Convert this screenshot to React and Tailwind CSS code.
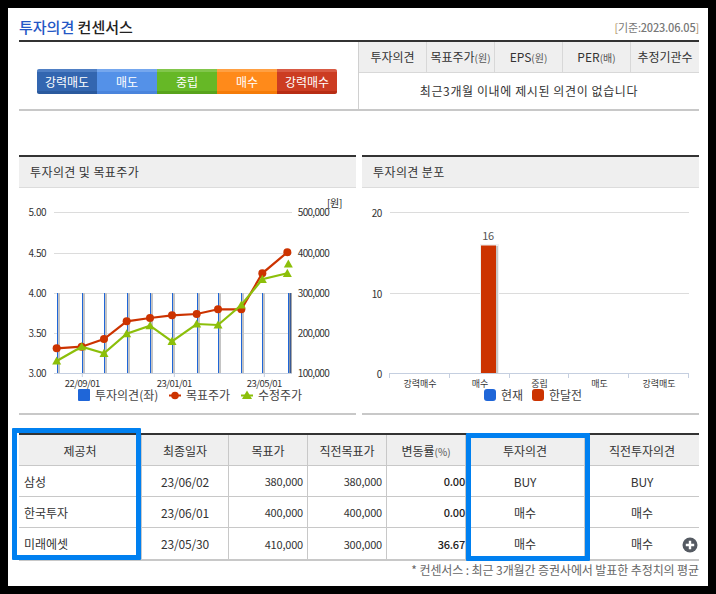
const FONT = { fontFamily: '"Noto Sans CJK KR", "Liberation Sans", sans-serif' };
const GRID = '#dcdcdc';

const pt = (x, y) => [x / 3 - 19, y / 3 + 2];
const line = (a) => a.map(([x, y]) => pt(x, y).map((n) => n.toFixed(1)).join(',')).join(' ');

const RED = [[170,475],[245,470],[312,447],[380,394],[450,384],[516,376],[590,372],[654,358],[724,358],[787,250],[862,187]];
const GREEN = [[170,513],[245,470],[312,490],[380,431],[450,407],[516,454],[590,402],[654,405],[724,345],[787,268],[862,250]];
const BARS = [38, 63, 85, 108, 131, 153, 178, 199, 222, 243];

function Tri({ x, y, s = 4.5 }) {
  const [a, b] = pt(x, y);
  return <polygon points={`${a},${b - s} ${a + s},${b + s * 0.8} ${a - s},${b + s * 0.8}`} fill="#8cbf0a" />;
}

function LineChart() {
  const ty = [[67,'5.00','500,000'],[190,'4.50','400,000'],[310,'4.00','300,000'],[430,'3.50','200,000'],[550,'3.00','100,000']];
  return (
    <svg width="337" height="225" className="block" style={FONT}>
      {ty.map(([y, l, r]) => {
        const [, Y] = pt(0, y);
        return (
          <g key={l}>
            <line x1="35" x2="273" y1={Math.floor(Y) + 0.5} y2={Math.floor(Y) + 0.5} stroke={GRID} strokeWidth="1" />
            <text x="27" y={Y + 4} textAnchor="end" fontSize="10" letterSpacing="-0.5" fill="#333">{l}</text>
            <text x="310" y={Y + 4} textAnchor="end" fontSize="10" letterSpacing="-0.7" fill="#333">{r}</text>
          </g>
        );
      })}
      <text x="323" y="19" textAnchor="end" fontSize="10" letterSpacing="-0.3" fill="#222">[원]</text>
      {BARS.map((x) => (
        <g key={x}>
          <rect x={x + 1} y="105" width="2" height="80" fill="#c4c4c4" />
          <rect x={x} y="105" width="1" height="80" fill="#1f66d8" />
        </g>
      ))}
      <rect x="269" y="105" width="1" height="80" fill="#1f66d8" />
      <rect x="270" y="105" width="1" height="80" fill="#8a93a3" />
      <rect x="271" y="105" width="1" height="80" fill="#3a5a94" />
      <rect x="272" y="105" width="1" height="80" fill="#a8a8a8" />
      <line x1="35" x2="273" y1="185.5" y2="185.5" stroke="#c5cfe0" />
      {[['22/09/01', 247], ['23/01/01', 523], ['23/05/01', 793]].map(([t, x]) => (
        <g key={t}>
          <text x={x / 3 - 19} y="199" textAnchor="middle" fontSize="9.5" letterSpacing="-0.5" fill="#333">{t}</text>
          <line x1={x / 3 - 19} x2={x / 3 - 19} y1="185" y2="189" stroke="#c5cfe0" />
        </g>
      ))}
      <polyline points={line(RED)} fill="none" stroke="#cc3300" strokeWidth="2.2" />
      {RED.map(([x, y]) => {
        const [a, b] = pt(x, y);
        return <circle key={x} cx={a} cy={b} r="4" fill="#cc3300" />;
      })}
      <polyline points={line(GREEN)} fill="none" stroke="#8cbf0a" strokeWidth="2.2" />
      {GREEN.map(([x, y]) => <Tri key={x} x={x} y={y} />)}
      <Tri x={865} y={222} />
      <rect x="59" y="201" width="12" height="12" rx="1" fill="#1f66d8" />
      <text x="76" y="212" fontSize="12" fill="#444">투자의견(좌)</text>
      <line x1="150" x2="162" y1="207.5" y2="207.5" stroke="#cc3300" strokeWidth="2" />
      <circle cx="156" cy="207.5" r="3.8" fill="#cc3300" />
      <text x="167" y="212" fontSize="12" fill="#444">목표주가</text>
      <line x1="222" x2="234" y1="207.5" y2="207.5" stroke="#8cbf0a" strokeWidth="2" />
      <polygon points="228,202.5 233,211 223,211" fill="#8cbf0a" />
      <text x="239" y="212" fontSize="12" fill="#444">수정주가</text>
    </svg>
  );
}

function BarChart() {
  const ticks = [27.5, 87.5, 147.5, 206.5, 266.5, 326.5];
  const cats = [['강력매수', 58], ['매수', 118], ['중립', 177.5], ['매도', 237.5], ['강력매도', 297]];
  return (
    <svg width="337" height="225" className="block" style={FONT}>
      {[[24.5, '20'], [105.5, '10'], [185.5, '0']].map(([y, l]) => (
        <g key={l}>
          <line x1="28" x2="327" y1={y} y2={y} stroke={l === '0' ? '#c5cfe0' : GRID} />
          <text x="20" y={y + 4} textAnchor="end" fontSize="10" letterSpacing="-0.4" fill="#333">{l}</text>
        </g>
      ))}
      {ticks.map((x) => <line key={x} x1={x} x2={x} y1="185" y2="190" stroke="#c5cfe0" />)}
      <rect x="118" y="56" width="19" height="129" fill="#f0f0f0" />
      <rect x="134" y="58" width="2" height="127" fill="#c8c8c8" />
      <rect x="119" y="57.5" width="15" height="127.5" fill="#cc3300" />
      <text x="126" y="52" textAnchor="middle" fontSize="11" letterSpacing="-0.3" fill="#555">16</text>
      {cats.map(([t, x]) => (
        <text key={t} x={x} y="199" textAnchor="middle" fontSize="9" fill="#333">{t}</text>
      ))}
      <rect x="122" y="201" width="12" height="12" rx="3" fill="#1f66d8" />
      <text x="139" y="212" fontSize="12" fill="#444">현재</text>
      <rect x="170" y="201" width="12" height="12" rx="3" fill="#cc3300" />
      <text x="187" y="212" fontSize="12" fill="#444">한달전</text>
    </svg>
  );
}

function Panel({ title, children }) {
  return (
    <div className="w-[337px] h-[260px] border-t-2 border-b-2 border-t-[#333] border-b-[#c8c8c8]">
      <div className="h-[31px] bg-[#efefef] border-b border-[#dcdcdc] pl-[11px] flex items-center text-[12px] tracking-[0.4px] text-[#333]">{title}</div>
      {children}
    </div>
  );
}

const LEGEND = [
  ['강력매도', 'bg-[#3366b0]', 'border-t-[#4f7fc4]', 'border-b-[#2b5a9e]', 'rounded-l-[2px]'],
  ['매도', 'bg-[#5491e8]', 'border-t-[#75a7ee]', 'border-b-[#4a84dc]', ''],
  ['중립', 'bg-[#66b826]', 'border-t-[#82c64c]', 'border-b-[#58a31c]', ''],
  ['매수', 'bg-[#ff8a1a]', 'border-t-[#ffa043]', 'border-b-[#f57c08]', ''],
  ['강력매수', 'bg-[#cc3c22]', 'border-t-[#d85a44]', 'border-b-[#b82d14]', 'rounded-r-[2px]'],
];

const COLS = 'grid-cols-[123px_87px_79px_79px_79px_119px_114px]';
const ROWS = [
  ['삼성', '23/06/02', '380,000', '380,000', '0.00', 'BUY', 'BUY'],
  ['한국투자', '23/06/01', '400,000', '400,000', '0.00', '매수', '매수'],
  ['미래에셋', '23/05/30', '410,000', '300,000', '36.67', '매수', '매수'],
];

function Small({ children }) {
  return <span className="text-[10px] text-[#555]">{children}</span>;
}

export default function App() {
  return (
    <div className="w-[716px] h-[594px] bg-black p-2 overflow-hidden" style={FONT}>
      <div className="relative h-[578px] bg-white pl-[11px] pr-[9px] text-[#333]">
        <div className="h-[32px] flex items-center justify-between">
          <div className="text-[15px] font-medium leading-none pt-[4px]">
            <span className="text-[#2457c5]">투자의견</span> <span className="text-[#222]">컨센서스</span>
          </div>
          <div className="text-[11px] pt-[6px] text-[#777] leading-none tracking-[-0.2px]">
            <span className="text-[#a98a60]">[</span>기준:<span className="font-medium">2023.06.05</span><span className="text-[#a98a60]">]</span>
          </div>
        </div>

        <div className="h-[71px] border-t-2 border-b-2 border-t-[#333] border-b-[#c8c8c8] flex">
          <div className="w-[340px] border-r border-[#d0d0d0] pl-[18px] pt-[27px]">
            <div className="flex w-[300px] h-[25px]">
              {LEGEND.map(([t, bg, top, bot, r]) => (
                <div key={t} className={`w-[60px] flex items-center justify-center text-[12px] text-white border-t-[3px] border-b-[3px] ${bg} ${top} ${bot} ${r}`}>{t}</div>
              ))}
            </div>
          </div>
          <div className="flex-1">
            <div className="h-[31px] grid grid-cols-[68px_68px_68px_68px_68px] bg-[#efefef] border-b border-[#d8d8d8] text-[12px]">
              <div className="flex items-center justify-center border-r border-[#d8d8d8]">투자의견</div>
              <div className="flex items-center justify-center border-r border-[#d8d8d8] whitespace-nowrap">목표주가<Small>(원)</Small></div>
              <div className="flex items-center justify-center border-r border-[#d8d8d8]">EPS<Small>(원)</Small></div>
              <div className="flex items-center justify-center border-r border-[#d8d8d8]">PER<Small>(배)</Small></div>
              <div className="flex items-center justify-center">추정기관수</div>
            </div>
            <div className="h-[36px] flex items-center justify-center text-[12px] tracking-[0.6px] text-[#333]">최근3개월 이내에 제시된 의견이 없습니다</div>
          </div>
        </div>

        <div className="flex justify-between mt-[44px]">
          <Panel title="투자의견 및 목표주가"><LineChart /></Panel>
          <Panel title="투자의견 분포"><BarChart /></Panel>
        </div>

        <div className="mt-[18px] border-t-2 border-b-2 border-t-[#333] border-b-[#c8c8c8] text-[12px]">
          <div className={`grid ${COLS} h-[31px] bg-[#efefef] border-b border-[#c8c8c8]`}>
            {[<span>제공처</span>, '최종일자', '목표가', '직전목표가', <span>변동률<Small>(%)</Small></span>, '투자의견', '직전투자의견'].map((h, i) => (
              <div key={i} className={`flex items-center justify-center pt-px ${i < 6 ? 'border-r border-[#c8c8c8]' : ''}`}>{h}</div>
            ))}
          </div>
          {ROWS.map((r, i) => (
            <div key={i} className={`grid ${COLS} h-[31px] ${i < 2 ? 'border-b border-[#c8c8c8]' : ''}`}>
              <div className="flex items-center pt-px pl-[5px] border-r border-[#c8c8c8]">{r[0]}</div>
              <div className="flex items-center justify-center pt-px border-r border-[#c8c8c8] tracking-[-0.2px]">{r[1]}</div>
              <div className="flex items-center justify-end pt-px pr-[4px] border-r border-[#c8c8c8] text-[11px] tracking-[-0.2px]">{r[2]}</div>
              <div className="flex items-center justify-end pt-px pr-[4px] border-r border-[#c8c8c8] text-[11px] tracking-[-0.2px]">{r[3]}</div>
              <div className="flex items-center justify-end pt-px border-r border-[#c8c8c8] text-[11px] font-medium text-[#222] tracking-[-0.2px]">{r[4]}</div>
              <div className="flex items-center justify-center pt-px border-r border-[#c8c8c8]">{r[5]}</div>
              <div className="relative flex items-center justify-center pt-px">
                {r[6]}
                {i === 2 && (
                  <svg width="16" height="16" viewBox="0 0 16 16" className="absolute right-[1px] top-[9px]">
                    <circle cx="8" cy="8" r="7.5" fill="#555a62" />
                    <path d="M8 3.8v8.4M3.8 8h8.4" stroke="#fff" strokeWidth="2.4" />
                  </svg>
                )}
              </div>
            </div>
          ))}
        </div>
        <div className="text-right text-[12px] tracking-[-0.1px] text-[#666] leading-none mt-[3px]">* 컨센서스 : 최근 3개월간 증권사에서 발표한 추정치의 평균</div>

        <div className="absolute left-[4px] top-[420px] w-[129px] h-[132px] border-[5px] border-[#0080f0] rounded-[1px]" />
        <div className="absolute left-[458px] top-[425px] w-[124px] h-[128px] border-[5px] border-[#0080f0] rounded-[1px]" />
      </div>
    </div>
  );
}
